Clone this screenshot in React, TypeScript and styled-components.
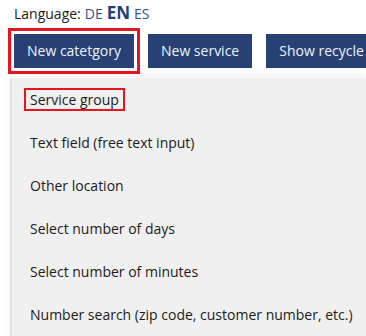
import React from 'react';
import styled, { createGlobalStyle } from 'styled-components';

const GlobalStyle = createGlobalStyle`
  html, body {
    margin: 0;
    padding: 0;
    background: #ffffff;
    overflow: hidden;
  }
  body {
    font-family: 'Open Sans', 'Liberation Sans', sans-serif;
    color: #1a1a1a;
  }
`;

const Page = styled.div`
  width: 366px;
  height: 336px;
  overflow: hidden;
`;

const LanguageBar = styled.div`
  padding: 2px 0 0 14px;
  height: 24px;
  font-size: 14px;
  line-height: 22px;
  color: #222;
  white-space: nowrap;
`;

const Lang = styled.a<{ $active?: boolean }>`
  margin-left: 4px;
  color: ${(p) => (p.$active ? '#243f78' : '#30508f')};
  font-weight: ${(p) => (p.$active ? 700 : 400)};
  font-size: ${(p) => (p.$active ? '17px' : '14px')};
  text-decoration: none;
`;

const Toolbar = styled.div`
  display: flex;
  gap: 14px;
  padding: 8px 0 0 14px;
  white-space: nowrap;
`;

const Button = styled.button<{ $focused?: boolean }>`
  flex: none;
  height: 34px;
  padding: 0 13px;
  border: none;
  background: #274174;
  color: #eef2fa;
  font-family: 'Open Sans', 'Liberation Sans', sans-serif;
  font-size: 14px;
  line-height: 34px;
  outline: ${(p) => (p.$focused ? '3px solid #e3151f' : 'none')};
  outline-offset: 3px;
`;

const Menu = styled.ul`
  list-style: none;
  margin: 10px 0 0 10px;
  padding: 0;
  background: #f0f0f0;
  border-left: 2px solid #e5e5e5;
  box-shadow: 0 -6px 8px rgba(0, 0, 0, 0.03);
  height: 300px;
`;

const Item = styled.li`
  height: 43px;
  display: flex;
  align-items: center;
  padding-left: 18px;
  font-size: 14px;
  color: #1b1b1b;
  white-space: nowrap;
`;

const Focused = styled.span`
  outline: 2px solid #e3151f;
  outline-offset: 0;
  padding: 1px 4px;
  margin-left: -4px;
  line-height: 17px;
`;

const items = [
  'Text field (free text input)',
  'Other location',
  'Select number of days',
  'Select number of minutes',
  'Number search (zip code, customer number, etc.)',
];

export default function App() {
  return (
    <Page>
      <GlobalStyle />
      <LanguageBar>
        Language:
        <Lang>DE</Lang>
        <Lang $active>EN</Lang>
        <Lang>ES</Lang>
      </LanguageBar>
      <Toolbar>
        <Button $focused>New catetgory</Button>
        <Button>New service</Button>
        <Button>Show recycle bin</Button>
      </Toolbar>
      <Menu>
        <Item>
          <Focused>Service group</Focused>
        </Item>
        {items.map((label) => (
          <Item key={label}>{label}</Item>
        ))}
      </Menu>
    </Page>
  );
}
